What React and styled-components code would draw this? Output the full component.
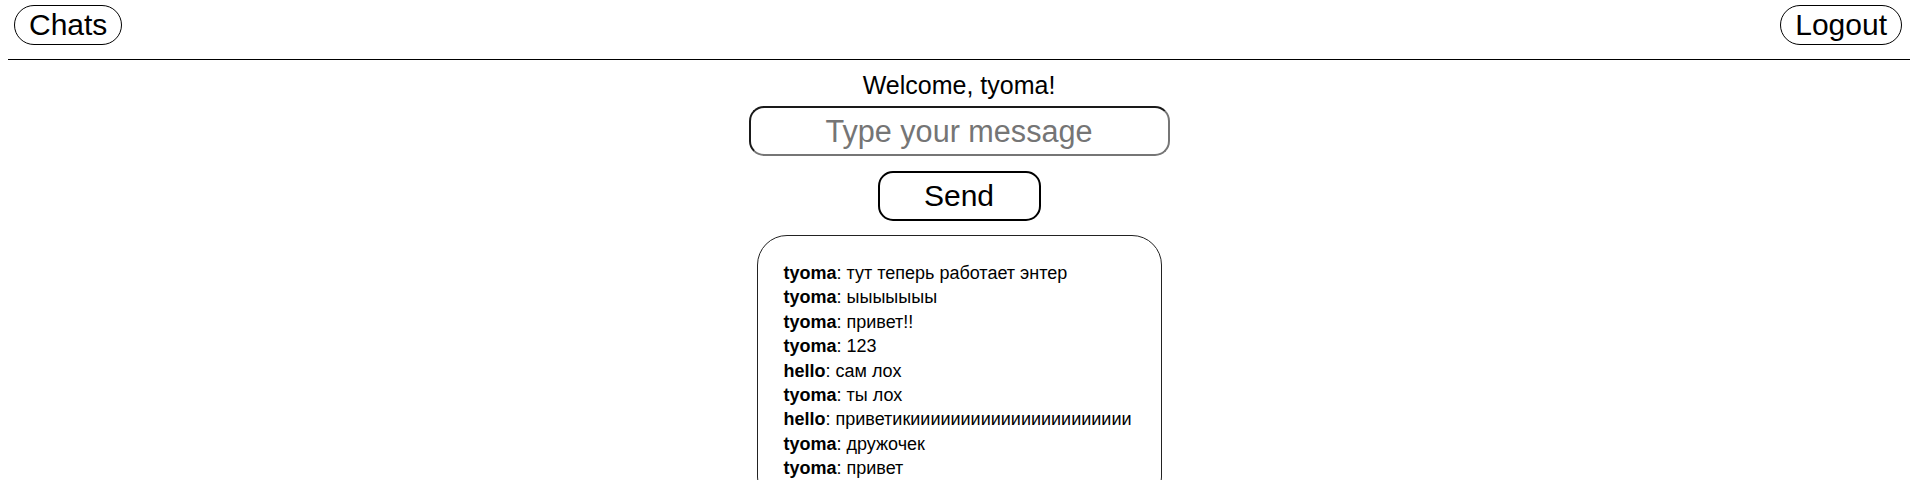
import React from "react";
import styled, { createGlobalStyle } from "styled-components";

const Global = createGlobalStyle`
  html, body { margin: 0; padding: 0; background: #fff; }
  body { font-family: "Liberation Sans", Arial, sans-serif; color: #000; }
`;

const Header = styled.header`
  display: flex;
  justify-content: space-between;
  align-items: flex-start;
  padding: 5px 16px 0 14px;
`;

const NavButton = styled.button`
  font-family: "Liberation Sans", Arial, sans-serif;
  font-size: 30px;
  line-height: normal;
  color: #000;
  background: #fff;
  border: 1px solid #000;
  border-radius: 20px;
  padding: 2px 14px;
  cursor: pointer;
`;

const Divider = styled.hr`
  margin: 14px 8px 0;
  border: 0;
  border-top: 1px solid #000;
  height: 0;
`;

const Main = styled.main`
  display: flex;
  flex-direction: column;
  align-items: center;
`;

const Welcome = styled.div`
  margin-top: 11px;
  font-size: 25px;
  line-height: normal;
`;

const MessageInput = styled.input`
  box-sizing: border-box;
  margin-top: 6px;
  width: 421px;
  height: 50px;
  font-family: "Liberation Sans", Arial, sans-serif;
  font-size: 30.6px;
  text-align: center;
  border-width: 2px;
  border-style: solid;
  border-color: #1a1a1a #767676 #767676 #1a1a1a;
  border-radius: 15px;
  background: #fff;
  outline: none;
  &::placeholder { color: #757575; }
`;

const SendButton = styled.button`
  box-sizing: border-box;
  margin-top: 15px;
  width: 163px;
  height: 50px;
  font-family: "Liberation Sans", Arial, sans-serif;
  font-size: 30px;
  color: #000;
  background: #fff;
  border: 2px solid #000;
  border-radius: 15px;
  cursor: pointer;
`;

const MessageBox = styled.div`
  box-sizing: border-box;
  margin-top: 14px;
  width: 405px;
  border: 1px solid #222;
  border-radius: 30px;
  padding: 25px 26px;
  font-size: 18px;
  line-height: 24.4px;
`;

const MessageRow = styled.div`
  white-space: nowrap;
`;

const Author = styled.b`
  font-weight: bold;
`;

const messages = [
  ["tyoma", "тут теперь работает энтер"],
  ["tyoma", "ыыыыыыы"],
  ["tyoma", "привет!!"],
  ["tyoma", "123"],
  ["hello", "сам лох"],
  ["tyoma", "ты лох"],
  ["hello", "приветик" + "и".repeat(22)],
  ["tyoma", "дружочек"],
  ["tyoma", "привет"],
];

export default function App() {
  return (
    <>
      <Global />
      <Header>
        <NavButton>Chats</NavButton>
        <NavButton>Logout</NavButton>
      </Header>
      <Divider />
      <Main>
        <Welcome>Welcome, tyoma!</Welcome>
        <MessageInput placeholder="Type your message" />
        <SendButton>Send</SendButton>
        <MessageBox>
          {messages.map(([a, t], i) => (
            <MessageRow key={i}>
              <Author>{a}</Author>: {t}
            </MessageRow>
          ))}
        </MessageBox>
      </Main>
    </>
  );
}
